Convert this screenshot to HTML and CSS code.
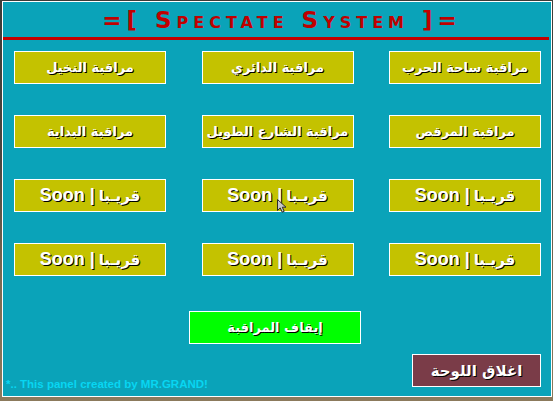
FILE: index.html
```html
<!DOCTYPE html>
<html lang="ar">
<head>
<meta charset="utf-8">
<title>Spectate System</title>
<link rel="stylesheet" href="styles.css">
</head>
<body>
<div class="panel">
  <div class="title">=[ Spectate System ]=</div>
  <div class="rule"></div>
  <div class="grid" dir="rtl">
    <div class="btn">مراقبة ساحة الحرب</div>
    <div class="btn">مراقبة الدائري</div>
    <div class="btn">مراقبة النخيل</div>
    <div class="btn">مراقبة المرقص</div>
    <div class="btn">مراقبة الشارع الطويل</div>
    <div class="btn">مراقبة البداية</div>
    <div class="btn soon"><span class="ar">قريـبا</span> | Soon</div>
    <div class="btn soon"><span class="ar">قريـبا</span> | Soon</div>
    <div class="btn soon"><span class="ar">قريـبا</span> | Soon</div>
    <div class="btn soon"><span class="ar">قريـبا</span> | Soon</div>
    <div class="btn soon"><span class="ar">قريـبا</span> | Soon</div>
    <div class="btn soon"><span class="ar">قريـبا</span> | Soon</div>
  </div>
  <div class="btn stop" dir="rtl">إيقاف المراقبة</div>
  <div class="footer">
    <div class="credit">*.. This panel created by MR.GRAND!</div>
    <div class="btn close" dir="rtl">اغلاق اللوحة</div>
  </div>
</div>
<svg class="cursor" width="11" height="14" viewBox="0 0 11 14">
  <path d="M0.5 0.5 L0.5 11.5 L3.2 8.9 L5.2 13.2 L7.2 12.3 L5.3 8.2 L9 8.2 Z" fill="#c8c8c8" stroke="#2a2a2a" stroke-width="1"/>
</svg>
</body>
</html>
```
FILE: styles.css
```css
html, body {
  margin: 0;
  padding: 0;
}
body {
  width: 553px;
  height: 401px;
  overflow: hidden;
  background: linear-gradient(180deg, #3d3c38 0%, #4a4640 40%, #7a6a52 70%, #8c7a5c 100%);
  font-family: "Liberation Sans", "DejaVu Sans", sans-serif;
  position: relative;
}
.panel {
  box-sizing: border-box;
  width: 550px;
  height: 396px;
  margin: 1px 0 0 2px;
  border: 1px solid #ffffff;
  background: #0aa3b9;
  display: flex;
  flex-direction: column;
}
.title {
  height: 35px;
  display: flex;
  align-items: center;
  justify-content: center;
  color: #c00000;
  font-family: "DejaVu Sans", sans-serif;
  font-weight: bold;
  font-size: 23px;
  font-variant: small-caps;
  letter-spacing: 5px;
  padding-left: 10px;
}
.rule {
  height: 3px;
  background: #c40000;
  margin-right: 2px;
}
.grid {
  margin-top: 11px;
  padding: 0 10px 0 11px;
  display: grid;
  grid-template-columns: repeat(3, 152px);
  justify-content: space-between;
  row-gap: 31px;
}
.btn {
  box-sizing: border-box;
  height: 33px;
  border: 1px solid #ffffff;
  background: #c4c200;
  color: #ffffff;
  font-family: "DejaVu Sans", sans-serif;
  font-weight: bold;
  font-size: 13px;
  display: flex;
  align-items: center;
  justify-content: center;
  text-shadow: 1px 1px 0 #000000;
  white-space: nowrap;
}
.soon {
  font-family: "Liberation Sans", "DejaVu Sans", sans-serif;
  font-size: 18px;
}
.soon .ar {
  font-family: "DejaVu Sans", sans-serif;
  font-size: 15px;
  margin-left: 4px;
}
.stop {
  width: 172px;
  margin: 35px 0 0 186px;
  background: #00ff00;
}
.footer {
  margin-top: 10px;
  display: flex;
  justify-content: space-between;
  align-items: flex-end;
  padding: 0 10px 0 3px;
}
.credit {
  color: #08d6f2;
  font-family: "Liberation Sans", sans-serif;
  font-weight: bold;
  font-size: 11.5px;
  margin-bottom: -3px;
}
.close {
  width: 129px;
  background: #7a3c48;
  font-size: 15px;
}
.cursor {
  position: absolute;
  left: 277px;
  top: 199px;
}
```
